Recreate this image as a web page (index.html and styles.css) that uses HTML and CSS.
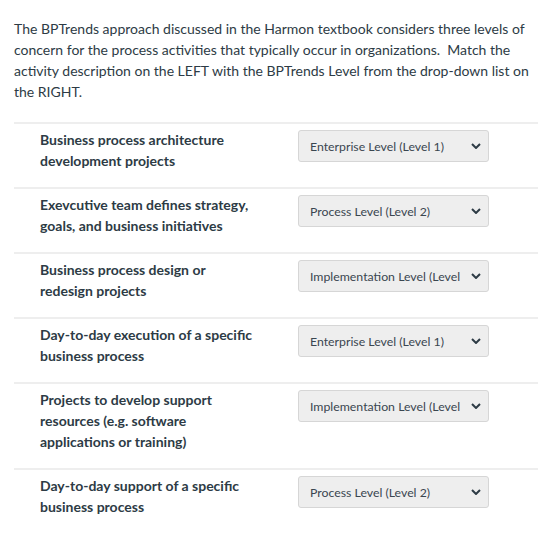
FILE: index.html
```html
<!DOCTYPE html>
<html>
<head>
<meta charset="utf-8">
<link rel="stylesheet" href="styles.css">
</head>
<body>
<div class="question">
  <p class="intro">The BPTrends approach discussed in the Harmon textbook considers three levels of concern for the process activities that typically occur in organizations.&nbsp; Match the activity description on the LEFT with the BPTrends Level from the drop-down list on the RIGHT.</p>
  <div class="answers">
    <div class="row">
      <div class="label">Business process architecture development projects</div>
      <div class="select"><span class="value">Enterprise Level (Level 1)</span><svg class="chev" width="10" height="6" viewBox="0 0 10 6"><path d="M1 1 L5 5 L9 1" fill="none" stroke="#2d3b45" stroke-width="2"/></svg></div>
    </div>
    <div class="row">
      <div class="label">Exevcutive team defines strategy, goals, and business initiatives</div>
      <div class="select"><span class="value">Process Level (Level 2)</span><svg class="chev" width="10" height="6" viewBox="0 0 10 6"><path d="M1 1 L5 5 L9 1" fill="none" stroke="#2d3b45" stroke-width="2"/></svg></div>
    </div>
    <div class="row">
      <div class="label">Business process design or redesign projects</div>
      <div class="select"><span class="value">Implementation Level (Level 3)</span><svg class="chev" width="10" height="6" viewBox="0 0 10 6"><path d="M1 1 L5 5 L9 1" fill="none" stroke="#2d3b45" stroke-width="2"/></svg></div>
    </div>
    <div class="row">
      <div class="label">Day-to-day execution of a specific business process</div>
      <div class="select"><span class="value">Enterprise Level (Level 1)</span><svg class="chev" width="10" height="6" viewBox="0 0 10 6"><path d="M1 1 L5 5 L9 1" fill="none" stroke="#2d3b45" stroke-width="2"/></svg></div>
    </div>
    <div class="row">
      <div class="label">Projects to develop support resources (e.g. software applications or training)</div>
      <div class="select"><span class="value">Implementation Level (Level 3)</span><svg class="chev" width="10" height="6" viewBox="0 0 10 6"><path d="M1 1 L5 5 L9 1" fill="none" stroke="#2d3b45" stroke-width="2"/></svg></div>
    </div>
    <div class="row last">
      <div class="label">Day-to-day support of a specific business process</div>
      <div class="select"><span class="value">Process Level (Level 2)</span><svg class="chev" width="10" height="6" viewBox="0 0 10 6"><path d="M1 1 L5 5 L9 1" fill="none" stroke="#2d3b45" stroke-width="2"/></svg></div>
    </div>
  </div>
</div>
</body>
</html>
```
FILE: styles.css
```css
html, body {
  margin: 0;
  padding: 0;
  background: #ffffff;
}
body {
  font-family: Lato, "Liberation Sans", sans-serif;
  color: #2d3b45;
}
.question {
  padding: 18px 0 0 14px;
}
.intro {
  margin: 0 6px 20px 0;
  font-size: 14px;
  line-height: 21px;
}
.answers {
  display: flex;
  flex-direction: column;
}
.row {
  display: grid;
  grid-template-columns: 258px 191px;
  align-items: start;
  border-top: 2px solid #eeeeee;
  padding: 5px 0 16px 26px;
}
.label {
  font-weight: bold;
  font-size: 14px;
  line-height: 21px;
  padding-right: 42px;
}
.select {
  margin-top: 1px;
  height: 32px;
  box-sizing: border-box;
  background: #eeeeee;
  border: 1px solid #d6d6d6;
  border-radius: 3px;
  display: flex;
  align-items: center;
  padding: 0 7px 0 11px;
  gap: 8px;
  overflow: hidden;
}
.value {
  flex: 1;
  font-size: 12.3px;
  color: #3a4650;
  white-space: nowrap;
  overflow: hidden;
}
.chev {
  flex: none;
}
```
